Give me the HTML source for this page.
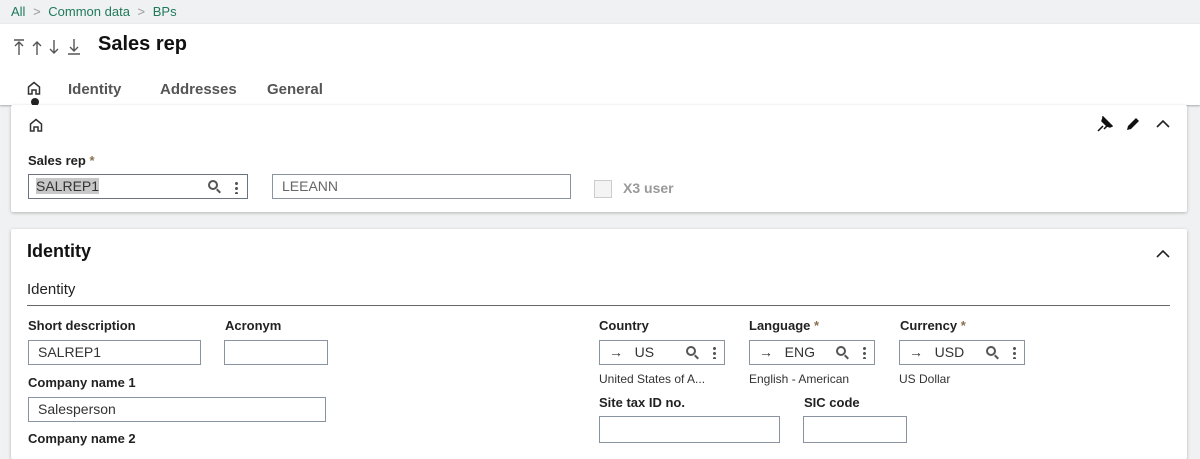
<!DOCTYPE html>
<html><head><style>
*{margin:0;padding:0;box-sizing:border-box}
body{width:1200px;height:446px;overflow:hidden;background:#f0f1f2;font-family:"Liberation Sans",sans-serif;color:#222;position:relative}
.a{position:absolute;white-space:nowrap}
.lbl{font-size:13px;font-weight:bold;color:#222}
.in{position:absolute;border:1px solid #8a94a0;background:#fff;font-size:14px;color:#333;padding-left:9px;line-height:23px;height:25px}
.card{position:absolute;background:#fff;border-radius:2px;box-shadow:0 1px 3px rgba(0,0,0,.25)}
.q{position:absolute;width:10px;height:10px;border:2px solid #555;border-radius:50%}
.q:after{content:"";position:absolute;width:5px;height:2px;background:#555;transform:rotate(45deg);left:6px;top:8px}
.d{position:absolute;width:3px;height:13px;background:radial-gradient(circle,#555 1.4px,transparent 1.6px) 0 0/3px 5px repeat-y}
.ast{color:#8a6f4e}
svg{position:absolute}
</style></head><body>
<div class="a" style="top:4px;left:11px;font-size:13px;color:#1f7a5a">All <span style="color:#999;margin:0 4px">&gt;</span> Common data <span style="color:#999;margin:0 4px">&gt;</span> BPs</div>
<div class="a" style="left:0;top:24px;width:1200px;height:81px;background:#fff;box-shadow:0 1px 2px rgba(0,0,0,.3)"></div>
<svg style="left:12px;top:38px" width="72" height="18" fill="none" stroke="#555" stroke-width="1.4">
<path d="M2 2h10M7 4v13M3 8l4-4 4 4"/>
<path d="M25 4v13M21 8l4-4 4 4"/>
<path d="M42 2v13M38 11l4 4 4-4"/>
<path d="M62 1v12M58 9l4 4 4-4M56 16h12"/>
</svg>
<div class="a" style="top:33px;left:98px;font-size:20px;font-weight:bold;color:#111">Sales rep</div>
<svg style="left:27px;top:81px" width="14" height="14" fill="none" stroke="#333" stroke-width="1.5"><path d="M1.5 13V6L7 1.5 12.5 6V13H9V9H5V13Z"/></svg>
<div class="a" style="top:98px;left:31px;width:8px;height:8px;border-radius:50%;background:#222"></div>
<div class="a" style="top:81px;left:68px;font-size:15px;font-weight:bold;color:#555">Identity</div>
<div class="a" style="top:81px;left:160px;font-size:15px;font-weight:bold;color:#555">Addresses</div>
<div class="a" style="top:81px;left:267px;font-size:15px;font-weight:bold;color:#555">General</div>

<div class="card" style="left:11px;top:105px;width:1176px;height:107px"></div>
<svg style="left:29px;top:118px" width="14" height="14" fill="none" stroke="#333" stroke-width="1.5"><path d="M1.5 13V6L7 1.5 12.5 6V13H9V9H5V13Z"/></svg>
<svg style="left:1097px;top:116px" width="16" height="16"><path d="M6 1l9 9-2 1-3-1-3 3 3-3-5-5 1-3z M6 10l-5 5" fill="#111" stroke="#111" stroke-width="1.5"/></svg>
<svg style="left:1125px;top:116px" width="16" height="16"><path d="M2 14l1-4 8-8 3 3-8 8z" fill="#111"/></svg>
<svg style="left:1156px;top:119px" width="14" height="10" fill="none" stroke="#222" stroke-width="1.6"><path d="M1 8l6-6 6 6"/></svg>
<div class="a lbl" style="top:153px;left:28px">Sales rep <span class="ast">*</span></div>
<div class="in" style="left:28px;top:174px;width:220px;padding-left:7px;border-color:#6a7480"><span style="background:#c8c8c8">SALREP1</span></div>
<div class="q" style="left:208px;top:180px"></div><div class="d" style="left:235px;top:181px"></div>
<div class="in" style="left:272px;top:174px;width:299px;color:#666">LEEANN</div>
<div class="a" style="left:594px;top:180px;width:18px;height:18px;border:1px solid #ccc;background:#f4f4f4"></div>
<div class="a" style="left:623px;top:180px;font-size:14px;font-weight:bold;color:#999">X3 user</div>

<div class="card" style="left:11px;top:229px;width:1176px;height:230px"></div>
<div class="a" style="top:241px;left:27px;font-size:18px;font-weight:bold;color:#111">Identity</div>
<svg style="left:1156px;top:249px" width="14" height="10" fill="none" stroke="#222" stroke-width="1.6"><path d="M1 8l6-6 6 6"/></svg>
<div class="a" style="top:281px;left:27px;font-size:15px;color:#222">Identity</div>
<div class="a" style="top:305px;left:27px;width:1143px;height:1px;background:#666"></div>
<div class="a lbl" style="top:318px;left:28px">Short description</div>
<div class="a lbl" style="top:318px;left:225px">Acronym</div>
<div class="in" style="left:28px;top:340px;width:173px">SALREP1</div>
<div class="in" style="left:224px;top:340px;width:104px"></div>
<div class="a lbl" style="top:375px;left:28px">Company name 1</div>
<div class="in" style="left:28px;top:397px;width:298px">Salesperson</div>
<div class="a lbl" style="top:431px;left:28px">Company name 2</div>

<div class="a lbl" style="top:318px;left:599px">Country</div>
<div class="a lbl" style="top:318px;left:749px">Language <span class="ast">*</span></div>
<div class="a lbl" style="top:318px;left:900px">Currency <span class="ast">*</span></div>
<div class="in" style="left:599px;top:340px;width:126px">→ &nbsp;&nbsp;US</div>
<div class="q" style="left:686px;top:346px"></div><div class="d" style="left:713px;top:346px"></div>
<div class="in" style="left:749px;top:340px;width:126px">→ &nbsp;&nbsp;ENG</div>
<div class="q" style="left:836px;top:346px"></div><div class="d" style="left:863px;top:346px"></div>
<div class="in" style="left:899px;top:340px;width:126px">→ &nbsp;&nbsp;USD</div>
<div class="q" style="left:986px;top:346px"></div><div class="d" style="left:1013px;top:346px"></div>
<div class="a" style="top:372px;left:599px;font-size:12px;color:#333">United States of A...</div>
<div class="a" style="top:372px;left:749px;font-size:12px;color:#333">English - American</div>
<div class="a" style="top:372px;left:899px;font-size:12px;color:#333">US Dollar</div>
<div class="a lbl" style="top:395px;left:599px">Site tax ID no.</div>
<div class="a lbl" style="top:395px;left:804px">SIC code</div>
<div class="in" style="left:599px;top:416px;width:181px;height:27px"></div>
<div class="in" style="left:803px;top:416px;width:104px;height:27px"></div>
</body></html>
